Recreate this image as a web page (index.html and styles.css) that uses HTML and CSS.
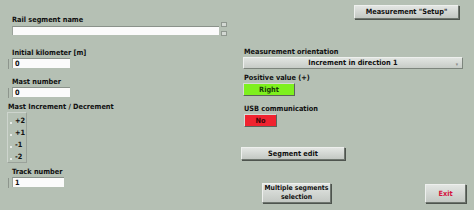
FILE: index.html
```html
<!DOCTYPE html>
<html lang="en">
<head>
<meta charset="UTF-8">
<title>Rail segment</title>
<link rel="stylesheet" href="styles.css">
</head>
<body>
  <div class="panel">
    <div class="left">
      <div class="label name-label">Rail segment name</div>
      <div class="name-row">
        <div class="input name-input"></div>
        <div class="scroll"><span></span><span></span></div>
      </div>

      <div class="label km-label">Initial kilometer [m]</div>
      <div class="num-row">
        <div class="spin"></div>
        <div class="input num-input">0</div>
      </div>

      <div class="label mast-label">Mast number</div>
      <div class="num-row">
        <div class="spin"></div>
        <div class="input num-input">0</div>
      </div>

      <div class="label incr-label">Mast Increment / Decrement</div>
      <div class="radio-box">
        <div class="radio"><i></i>+2</div>
        <div class="radio"><i></i>+1</div>
        <div class="radio"><i></i>-1</div>
        <div class="radio"><i></i>-2</div>
      </div>

      <div class="label track-label">Track number</div>
      <div class="num-row">
        <div class="spin"></div>
        <div class="input track-input">1</div>
      </div>
    </div>

    <div class="right">
      <div class="btn setup-btn">Measurement "Setup"</div>

      <div class="label orient-label">Measurement orientation</div>
      <div class="dropdown">Increment in direction 1<span class="arrow">&#9662;</span></div>

      <div class="label pos-label">Positive value (+)</div>
      <div class="led green">Right</div>

      <div class="label usb-label">USB communication</div>
      <div class="led red">No</div>

      <div class="btn edit-btn">Segment edit</div>

      <div class="bottom-row">
        <div class="btn multi-btn">Multiple segments<br>selection</div>
        <div class="btn exit-btn">Exit</div>
      </div>
    </div>
  </div>
</body>
</html>
```

FILE: styles.css
```css
body {
  margin: 0;
  background: #b5c0b4;
  font-family: "DejaVu Sans Condensed", "DejaVu Sans", sans-serif;
  font-weight: bold;
  font-size: 7.3px;
  color: #111;
}
.panel {
  display: grid;
  grid-template-columns: 241px 233px;
  width: 474px;
  height: 210px;
  overflow: hidden;
}
.label {
  height: 10px;
  line-height: 10px;
  white-space: nowrap;
}
.input {
  background: #fbfbfb;
  border-top: 1px solid #8a928a;
  border-left: 1px solid #9aa29a;
  box-sizing: border-box;
  line-height: 9px;
  padding-left: 2px;
}

/* left column */
.left {
  padding-top: 15px;
}
.name-label { margin-left: 12px; }
.name-row {
  display: flex;
  margin-left: 12px;
  height: 12px;
}
.name-input {
  width: 207px;
  height: 9px;
  margin-top: 1px;
}
.scroll {
  width: 6px;
  height: 14px;
  margin-top: -3px;
  margin-left: 2px;
  display: flex;
  flex-direction: column;
  justify-content: space-between;
}
.scroll span {
  height: 5px;
  background: #d3d8d3;
  border: 1px solid #8f978f;
  box-sizing: border-box;
}
.km-label { margin-top: 11px; margin-left: 12px; }
.mast-label { margin-top: 9px; margin-left: 12px; }
.num-row {
  display: flex;
  margin-left: 8px;
  height: 10px;
}
.spin {
  width: 3px;
  height: 10px;
  margin-right: 1px;
  margin-top: 1px;
  border-left: 1px solid #8d958d;
  box-sizing: border-box;
}
.num-input {
  width: 58px;
  height: 10px;
}
.incr-label { margin-top: 5px; margin-left: 8px; }
.radio-box {
  width: 20px;
  height: 51px;
  margin-left: 7px;
  padding-top: 2px;
  box-sizing: border-box;
  border: 1px solid #cdd4cd;
  border-right-color: #9aa29a;
  border-bottom-color: #9aa29a;
}
.radio {
  height: 12px;
  line-height: 12px;
  display: flex;
  align-items: center;
  padding-left: 2px;
}
.radio i {
  width: 2px;
  height: 2px;
  background: #e8ece8;
  margin-right: 3px;
  margin-top: 4px;
}
.track-label { margin-top: 4px; margin-left: 12px; }
.track-input { width: 52px; }

/* right column */
.btn {
  box-sizing: border-box;
  background: linear-gradient(#e3e6e3, #c3c8c3);
  border: 1px solid #6e756e;
  border-top-color: #eef0ee;
  border-left-color: #eef0ee;
  box-shadow: 1px 1px 0 #4e544e;
  text-align: center;
  white-space: nowrap;
}
.setup-btn {
  margin-top: 5px;
  margin-left: 113px;
  width: 105px;
  height: 14px;
  line-height: 12px;
}
.orient-label { margin-top: 28px; margin-left: 3px; }
.dropdown {
  position: relative;
  width: 220px;
  height: 12px;
  margin-left: 2px;
  box-sizing: border-box;
  background: linear-gradient(#e1e5e1, #c7ccc7);
  border: 1px solid #eef0ee;
  border-right-color: #7d857d;
  border-bottom-color: #7d857d;
  text-align: center;
  line-height: 10px;
}
.arrow {
  position: absolute;
  right: 4px;
  top: 1px;
  font-size: 5px;
  color: #888;
}
.pos-label { margin-top: 4px; margin-left: 3px; }
.led {
  box-sizing: border-box;
  height: 13px;
  line-height: 11px;
  text-align: center;
  border: 1px solid #5b625b;
  border-top-color: #d6dbd6;
  border-left-color: #d6dbd6;
}
.green {
  width: 52px;
  margin-left: 2px;
  background: #7ef01e;
  color: #173a0a;
}
.usb-label { margin-top: 8px; margin-left: 3px; }
.red {
  width: 33px;
  margin-left: 3px;
  background: #f0232f;
  color: #3a0608;
}
.edit-btn {
  margin-top: 20px;
  width: 104px;
  height: 13px;
  line-height: 11px;
}
.bottom-row {
  display: flex;
  margin-top: 23px;
}
.multi-btn {
  margin-left: 21px;
  width: 69px;
  height: 20px;
  line-height: 9px;
  font-size: 6.8px;
}
.exit-btn {
  margin-left: 94px;
  margin-top: 1px;
  width: 41px;
  height: 19px;
  line-height: 17px;
  color: #d4123f;
}
```
